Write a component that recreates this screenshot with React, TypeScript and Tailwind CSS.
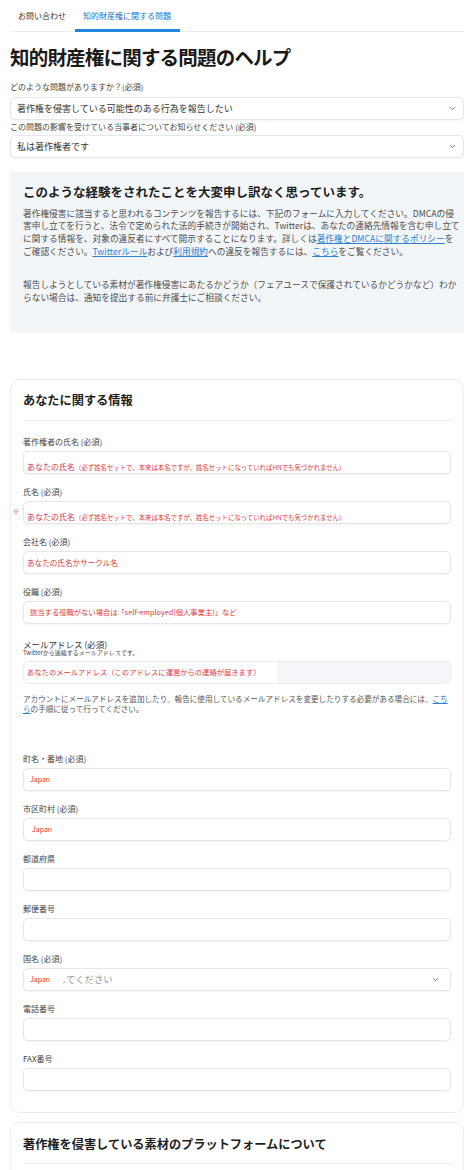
import React from "react";
import { ChevronDown } from "lucide-react";

const RED = "text-[#e0393e]";

function Label({ children, className = "" }: { children: React.ReactNode; className?: string }) {
  return <div className={`text-[8px] leading-[12px] text-[#444] ${className}`}>{children}</div>;
}

function Box({ children, className = "" }: { children?: React.ReactNode; className?: string }) {
  return (
    <div
      className={`h-[23px] rounded-[5px] border border-[#e5e7ea] bg-white shadow-[0_1px_2px_rgba(0,0,0,0.05)] flex items-center ${className}`}
    >
      {children}
    </div>
  );
}

function Field({
  label,
  children,
  first = false,
  boxClass = "",
}: {
  label: React.ReactNode;
  children?: React.ReactNode;
  first?: boolean;
  boxClass?: string;
}) {
  return (
    <div className={first ? "" : "mt-[12px]"}>
      <Label className="mb-[3px]">{label}</Label>
      <Box className={boxClass}>{children}</Box>
    </div>
  );
}

function Link({ children }: { children: React.ReactNode }) {
  return <span className="text-[#2b7fd0] underline underline-offset-1">{children}</span>;
}

function NameText() {
  return (
    <span className={`${RED} whitespace-nowrap`}>
      <span className="text-[8px]">あなたの氏名</span>
      <span className="text-[6.4px]">（必ず姓名セットで、本来は本名ですが、姓名セットになっていればHNでも気づかれません）</span>
    </span>
  );
}

export default function App() {
  return (
    <div
      className="w-[474px] min-h-[1170px] bg-white text-[#222]"
      style={{ fontFamily: '"Noto Sans CJK JP", "Noto Sans", "Liberation Sans", sans-serif' }}
    >
      {/* Tabs */}
      <div className="mx-[10px] h-[32px] flex border-b border-[#eceef0]">
        <div className="w-[65px] pl-[8px] flex items-center text-[8px] text-[#333]">お問い合わせ</div>
        <div className="w-[105px] pl-[8px] flex items-center text-[8px] text-[#1f74c8] border-b-[3px] border-[#2186dc] pt-[3px] -mb-px">
          知的財産権に関する問題
        </div>
      </div>

      <div className="px-[10px]">
        <h1 className="mt-[11px] text-[19.5px] tracking-[-0.8px] leading-[28px] font-bold text-[#1a1a1a] whitespace-nowrap">
          知的財産権に関する問題のヘルプ
        </h1>

        <Label className="mt-[10px]">どのような問題がありますか？(必須)</Label>
        <Box className="mt-[4px] h-[22px] pl-[6px] pr-[6px] justify-between">
          <span className="text-[9px] text-[#333]">著作権を侵害している可能性のある行為を報告したい</span>
          <ChevronDown size={9} strokeWidth={2} className="text-[#555]" />
        </Box>
        <Label className="mt-[1px]">この問題の影響を受けている当事者についてお知らせください (必須)</Label>
        <Box className="mt-[2px] h-[22px] pl-[6px] pr-[6px] justify-between">
          <span className="text-[9px] text-[#333]">私は著作権者です</span>
          <ChevronDown size={9} strokeWidth={2} className="text-[#555]" />
        </Box>

        {/* Gray info box */}
        <div className="mt-[14px] h-[161px] bg-[#f3f6f9] pl-[13px] pr-[8px] pt-[11px]">
          <div className="text-[12.5px] leading-[18px] font-bold text-[#1e1e1e] whitespace-nowrap">
            このような経験をされたことを大変申し訳なく思っています。
          </div>
          <div className="mt-[6.6px] text-[8.7px] leading-[12.7px] text-[#4d4d4d] whitespace-nowrap">
            <div>著作権侵害に該当すると思われるコンテンツを報告するには、下記のフォームに入力してください。DMCAの侵</div>
            <div>害申し立てを行うと、法令で定められた法的手続きが開始され、Twitterは、あなたの連絡先情報を含む申し立て</div>
            <div>
              に関する情報を、対象の違反者にすべて開示することになります。詳しくは<Link>著作権とDMCAに関するポリシー</Link>を
            </div>
            <div>
              ご確認ください。<Link>Twitterルール</Link>および<Link>利用規約</Link>への違反を報告するには、<Link>こちら</Link>をご覧ください。
            </div>
          </div>
          <div className="mt-[20.6px] text-[8.7px] leading-[12.7px] text-[#4d4d4d] whitespace-nowrap">
            <div>報告しようとしている素材が著作権侵害にあたるかどうか（フェアユースで保護されているかどうかなど）わか</div>
            <div>らない場合は、通知を提出する前に弁護士にご相談ください。</div>
          </div>
        </div>

        {/* Card 1 */}
        <div className="mt-[46px] rounded-[10px] border border-[#eceef0] px-[12px] pt-[11px] pb-[21px]">
          <div className="text-[12.2px] leading-[18px] font-bold text-[#1e1e1e]">あなたに関する情報</div>
          <div className="mt-[11px] h-px bg-[#eef0f2] mr-[-3px]" />

          <div className="mt-[15px]">
            <Field first label="著作権者の氏名 (必須)" boxClass="pl-[3px]">
              <NameText />
            </Field>
            <div className="mt-[12px]">
              <Label className="mb-[3px]">氏名 (必須)</Label>
              <div className="relative">
                <span className={`absolute left-[-10px] top-[7px] text-[6px] leading-[8px] ${RED}`}>※</span>
                <Box className="pl-[3px]">
                  <NameText />
                </Box>
              </div>
            </div>
            <Field label="会社名 (必須)" boxClass="pl-[3px]">
              <span className={`${RED} text-[7.6px]`}>あなたの氏名かサークル名</span>
            </Field>
            <Field label="役職 (必須)" boxClass="pl-[6px]">
              <span className={`${RED} text-[7.3px] whitespace-nowrap`}>
                該当する役職がない場合は「self-employed(個人事業主)」など
              </span>
            </Field>

            {/* Email */}
            <div className="mt-[15.5px]">
              <div className="text-[8.5px] leading-[9px] text-[#333]">メールアドレス (必須)</div>
              <div className="text-[6px] leading-[7px] text-[#444]">Twitterから連絡するメールアドレスです。</div>
              <div className="mt-[5.5px] h-[23px] rounded-[5px] border border-[#eceef1] bg-[#f4f6f9] flex items-stretch overflow-hidden">
                <span className={`bg-white w-[253px] pl-[3px] flex items-center rounded-l-[5px] ${RED} text-[7.3px] whitespace-nowrap`}>
                  あなたのメールアドレス（このアドレスに運営からの連絡が届きます）
                </span>
              </div>
              <div className="mt-[9.75px] text-[7.6px] leading-[10.5px] text-[#555] whitespace-nowrap">
                <div>
                  アカウントにメールアドレスを追加したり、報告に使用しているメールアドレスを変更したりする必要がある場合には、<Link>こち</Link>
                </div>
                <div>
                  <Link>ら</Link>の手順に従って行ってください。
                </div>
              </div>
            </div>

            {/* Address */}
            <div className="mt-[38px]">
              <Field first label="町名・番地 (必須)" boxClass="pl-[6px]">
                <span className={`${RED} text-[7px]`}>Japan</span>
              </Field>
              <Field label="市区町村 (必須)" boxClass="pl-[8px]">
                <span className={`${RED} text-[7px]`}>Japan</span>
              </Field>
              <Field label="都道府県" />
              <Field label="郵便番号" />
              <div className="mt-[12px]">
                <Label className="mb-[3px]">国名 (必須)</Label>
                <Box className="pl-[6px] pr-[10px]">
                  <span className={`${RED} text-[7px] w-[33px] shrink-0`}>Japan</span>
                  <span className="w-[63px] shrink-0 overflow-hidden flex">
                    <span className="text-[9.4px] text-[#9a9a9a] whitespace-nowrap ml-[-6px]">してください</span>
                  </span>
                  <span className="flex-1" />
                  <ChevronDown size={9} strokeWidth={2} className="text-[#555]" />
                </Box>
              </div>
              <Field label="電話番号" />
              <Field label="FAX番号" />
            </div>
          </div>
        </div>

        {/* Card 2 */}
        <div className="mt-[9px] rounded-[10px] border border-[#eceef0] px-[12px] pt-[12px] pb-[60px]">
          <div className="text-[12.2px] leading-[18px] font-bold text-[#1e1e1e] whitespace-nowrap">
            著作権を侵害している素材のプラットフォームについて
          </div>
          <div className="mt-[10px] h-px bg-[#eef0f2] mr-[-3px]" />
        </div>
      </div>
    </div>
  );
}
